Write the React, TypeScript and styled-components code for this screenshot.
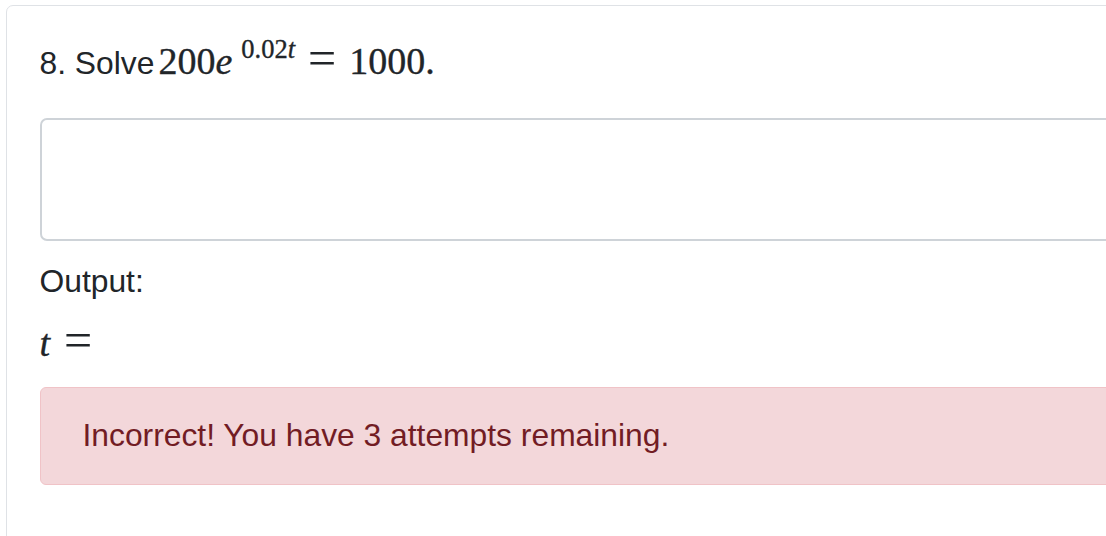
import React from "react";
import styled, {createGlobalStyle} from "styled-components";

const GlobalStyle = createGlobalStyle`
  html, body {
    margin: 0;
    padding: 0;
    background: #ffffff;
    overflow: hidden;
  }
  body {
    font-family: "Liberation Sans", Arial, sans-serif;
    color: #212529;
  }
`

const Page = styled.div`
  padding: 5px 0 0 6px;
  width: 1106px;
  height: 536px;
  box-sizing: border-box;
  overflow: hidden;
`

const Card = styled.div`
  width: 1200px;
  height: 560px;
  box-sizing: border-box;
  border: 1.5px solid #dfe2e6;
  border-radius: 7px;
  padding: 35px 0 0 32.5px;
  display: flex;
  flex-direction: column;
`

const Title = styled.div`
  display: flex;
  align-items: baseline;
  height: 40px;
  font-size: 31.8px;
  line-height: 37px;
`

const Math = styled.span`
  font-family: "Liberation Serif", "Times New Roman", serif;
  font-size: 38px;
  line-height: 40px;
  white-space: nowrap;
  -webkit-text-stroke: 0.35px currentColor;
`

const MathVar = styled.span`
  font-style: italic;
`

const Sup = styled.span`
  position: relative;
  top: -16px;
  font-size: 26.5px;
  line-height: 0;
  margin-left: 9px;
`

const Rel = styled.span<{gap: number}>`
  position: relative;
  top: 1px;
  font-size: 50px;
  line-height: 0;
  -webkit-text-stroke: 0.1px currentColor;
  margin: 0 ${(p) => p.gap}px 0 ${(p) => p.gap}px;
`

const AnswerBox = styled.div`
  margin-top: 37px;
  height: 123px;
  box-sizing: border-box;
  border: 2px solid #ced3d8;
  border-radius: 7px;
  background: #ffffff;
`

const Label = styled.div`
  margin-top: 22px;
  font-size: 31.8px;
  line-height: 37px;
`

const OutputRow = styled.div`
  margin-top: 23px;
  height: 40px;
  display: flex;
  align-items: baseline;
`

const Alert = styled.div`
  margin-top: 24px;
  height: 98px;
  box-sizing: border-box;
  border: 1.5px solid #f0c3c7;
  border-radius: 6px;
  background: #f3d7da;
  color: #721c24;
  font-size: 31.8px;
  line-height: 37px;
  padding: 29px 0 0 42px;
`

export default function App() {
    return (
        <>
            <GlobalStyle />
            <Page>
                <Card>
                    <Title>
                        <span>8. Solve</span>
                        <Math style={{marginLeft: 4}}>
                            200<MathVar>e</MathVar>
                            <Sup>0.02<MathVar>t</MathVar></Sup>
                            <Rel gap={13}>=</Rel>1000.
                        </Math>
                    </Title>
                    <AnswerBox />
                    <Label>Output:</Label>
                    <OutputRow>
                        <Math>
                            <MathVar>t</MathVar>
                            <Rel gap={14}>=</Rel>
                        </Math>
                    </OutputRow>
                    <Alert>Incorrect! You have 3 attempts remaining.</Alert>
                </Card>
            </Page>
        </>
    )
}
